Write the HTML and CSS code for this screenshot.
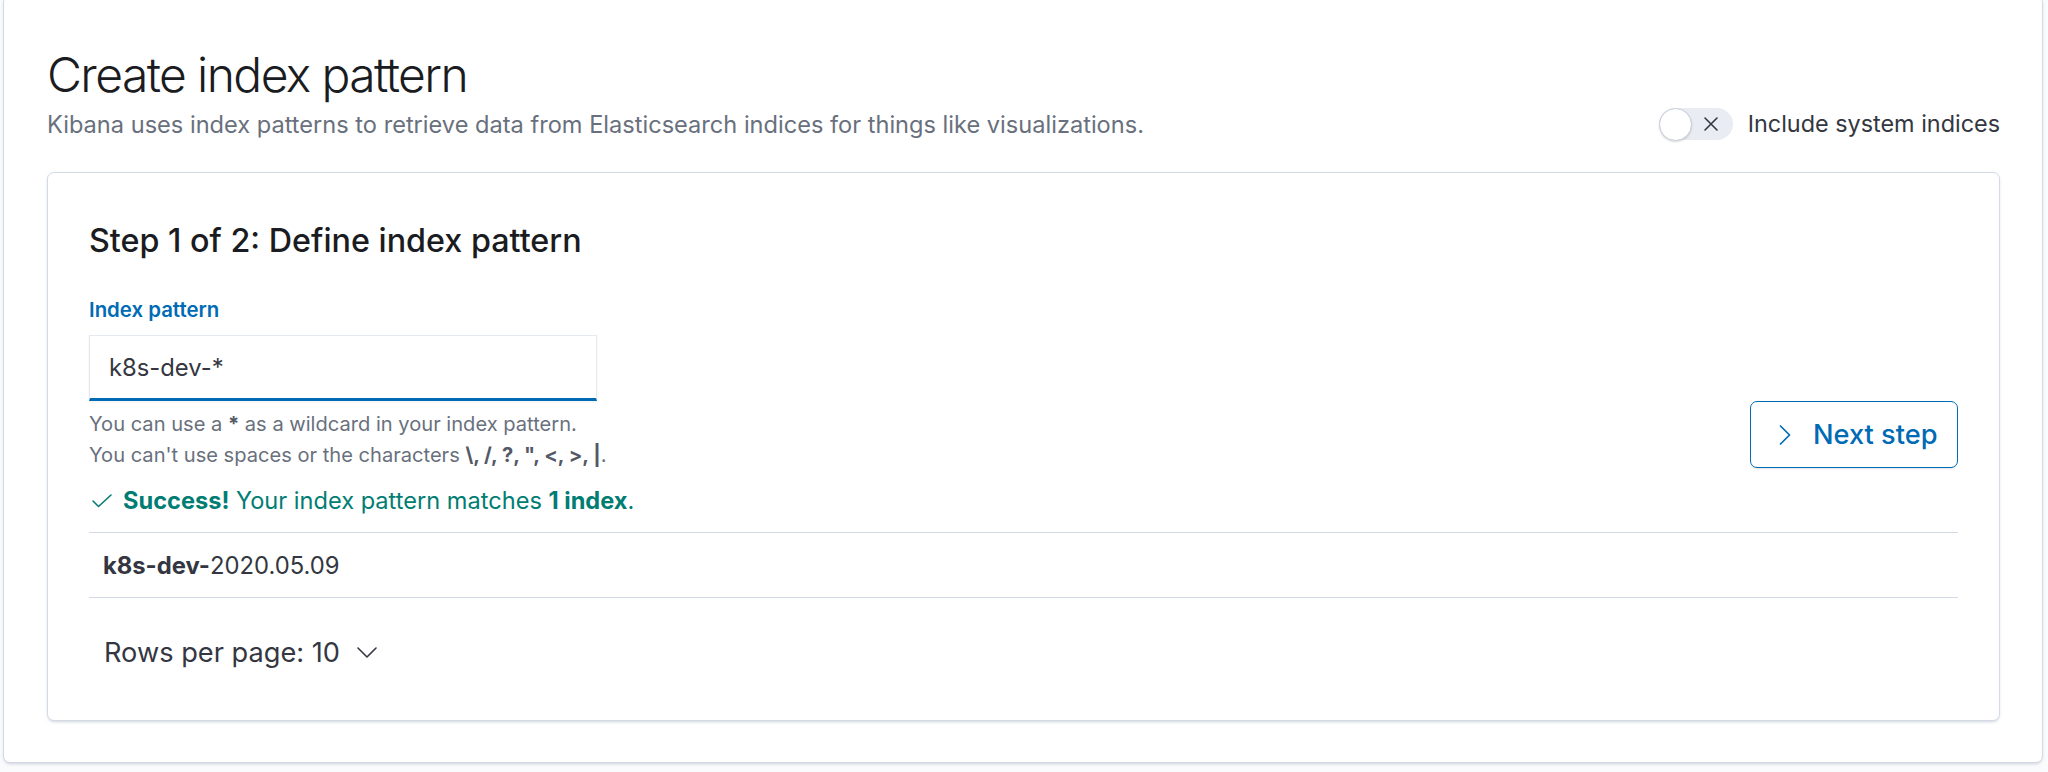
FILE: index.html
```html
<!DOCTYPE html>
<html lang="en">
<head>
<meta charset="utf-8">
<title>Create index pattern</title>
<link rel="stylesheet" href="styles.css">
</head>
<body>
<div class="page">
  <div class="outer">
    <header class="head">
      <div class="head-text">
        <h1 class="title">Create index pattern</h1>
        <p class="sub">Kibana uses index patterns to retrieve data from Elasticsearch indices for things like visualizations.</p>
      </div>
      <div class="switch-row">
        <span class="switch">
          <span class="knob"></span>
          <svg class="switch-x" width="16" height="16" viewBox="0 0 16 16"><path d="M2 2 L14 14 M14 2 L2 14" stroke="#343741" stroke-width="1.6" fill="none" stroke-linecap="round"/></svg>
        </span>
        <span class="switch-label">Include system indices</span>
      </div>
    </header>

    <section class="card">
      <div class="step-top">
        <div class="step-main">
          <h2 class="step-title">Step 1 of 2: Define index pattern</h2>
          <div class="field-label">Index pattern</div>
          <div class="input">k8s-dev-*</div>
          <div class="help">
            <div>You can use a <strong>*</strong> as a wildcard in your index pattern.</div>
            <div>You can't use spaces or the characters <strong>\, /, ?, ", &lt;, &gt;, |</strong>.</div>
          </div>
          <div class="success">
            <svg class="check" width="20" height="14" viewBox="0 0 20 14"><path d="M1 7 L6.5 12.5 L19 1" stroke="#017d73" stroke-width="1.6" fill="none" stroke-linecap="round" stroke-linejoin="round"/></svg>
            <span><strong>Success!</strong> Your index pattern matches <strong>1 index</strong>.</span>
          </div>
        </div>
        <button class="next">
          <svg width="12" height="20" viewBox="0 0 12 20"><path d="M1.5 1 L10.5 10 L1.5 19" stroke="#006bb4" stroke-width="1.7" fill="none" stroke-linecap="round" stroke-linejoin="round"/></svg>
          <span>Next step</span>
        </button>
      </div>

      <div class="table">
        <div class="row"><strong>k8s-dev-</strong>2020.05.09</div>
      </div>

      <div class="pager">
        <button class="rows">
          <span>Rows per page: 10</span>
          <svg width="20" height="11" viewBox="0 0 20 11"><path d="M1 1 L10 10 L19 1" stroke="#343741" stroke-width="1.6" fill="none" stroke-linecap="round" stroke-linejoin="round"/></svg>
        </button>
      </div>
    </section>
  </div>
</div>
</body>
</html>
```

FILE: styles.css
```css
* { box-sizing: border-box; }

html, body {
  margin: 0;
  padding: 0;
  background: #fafbfd;
  font-family: Inter, "Noto Sans", "Liberation Sans", sans-serif;
  color: #343741;
}

.page {
  padding: 0 5px 8px 3px;
}

.outer {
  margin-top: -4px;
  background: #ffffff;
  border: 1px solid #d3dae6;
  border-radius: 7px;
  box-shadow: 0 2px 3px -1px rgba(152, 162, 179, 0.35), 0 1px 5px -2px rgba(152, 162, 179, 0.3);
  padding: 49px 42px 41px 43px;
}

.head {
  display: flex;
  align-items: flex-end;
  justify-content: space-between;
}

.title {
  margin: 0;
  font-size: 48px;
  line-height: 58px;
  font-weight: 300;
  color: #1a1c21;
  letter-spacing: -1.6px;
}

.sub {
  margin: 5px 0 0;
  font-size: 23.6px;
  line-height: 32px;
  color: #69707d;
}

.switch-row {
  display: flex;
  align-items: center;
  gap: 15px;
  height: 32px;
  margin-bottom: 1px;
}

.switch {
  position: relative;
  display: flex;
  align-items: center;
  justify-content: flex-end;
  width: 74px;
  height: 32px;
  border-radius: 16px;
  background: #e9edf3;
  padding-right: 14px;
}

.knob {
  position: absolute;
  left: 0;
  top: 0;
  width: 33px;
  height: 33px;
  border-radius: 50%;
  background: #ffffff;
  border: 1px solid #c8cfd9;
  box-shadow: 0 1px 2px rgba(0, 0, 0, 0.15);
}

.switch-label {
  font-size: 23.4px;
  line-height: 32px;
  color: #343741;
}

.card {
  margin-top: 31px;
  background: #ffffff;
  border: 1px solid #d3dae6;
  border-radius: 7px;
  box-shadow: 0 2px 3px -1px rgba(152, 162, 179, 0.35), 0 1px 5px -2px rgba(152, 162, 179, 0.3);
  padding: 41px;
}

.step-top {
  display: flex;
  justify-content: space-between;
  align-items: flex-start;
}

.step-main {
  display: flex;
  flex-direction: column;
}

.step-title {
  margin: 0;
  font-size: 32.3px;
  line-height: 53px;
  font-weight: 500;
  color: #1a1c21;
}

.field-label {
  margin-top: 31px;
  font-size: 20.4px;
  line-height: 24px;
  font-weight: 600;
  color: #006bb4;
}

.input {
  margin-top: 13px;
  width: 508px;
  height: 66px;
  border: 1px solid #e4e9f1;
  border-bottom: 3px solid #006bb4;
  background: #ffffff;
  box-shadow: 0 1px 2px rgba(152, 162, 179, 0.15);
  padding: 0 19px;
  display: flex;
  align-items: center;
  font-size: 23.8px;
  color: #343741;
}

.help {
  margin-top: 8px;
  font-size: 20.1px;
  line-height: 31px;
  color: #69707d;
}

.help strong {
  color: #535966;
  font-weight: 700;
}

.success {
  margin-top: 13px;
  display: flex;
  align-items: center;
  gap: 11px;
  padding-left: 3px;
  font-size: 23.6px;
  line-height: 34px;
  color: #017d73;
}

.success strong {
  font-weight: 700;
}

.next {
  margin-top: 187px;
  width: 208px;
  height: 67px;
  border: 1.7px solid #006bb4;
  border-radius: 7px;
  background: #ffffff;
  display: flex;
  align-items: center;
  justify-content: flex-start;
  gap: 22px;
  padding: 0 0 0 28px;
  font-family: inherit;
  font-size: 27.2px;
  font-weight: 500;
  color: #006bb4;
  box-shadow: 0 2px 2px -1px rgba(152, 162, 179, 0.3);
}

.table {
  margin-top: 14px;
}

.row {
  border-top: 1px solid #d3dae6;
  border-bottom: 1px solid #d3dae6;
  height: 66px;
  display: flex;
  align-items: center;
  padding-left: 14px;
  font-size: 23.8px;
  color: #343741;
}

.row strong {
  font-weight: 700;
}

.pager {
  margin-top: 27px;
  display: flex;
}

.rows {
  height: 54px;
  border: none;
  background: transparent;
  display: flex;
  align-items: center;
  gap: 17px;
  padding: 0 0 0 15px;
  font-family: inherit;
  font-size: 27.2px;
  color: #343741;
}
```
